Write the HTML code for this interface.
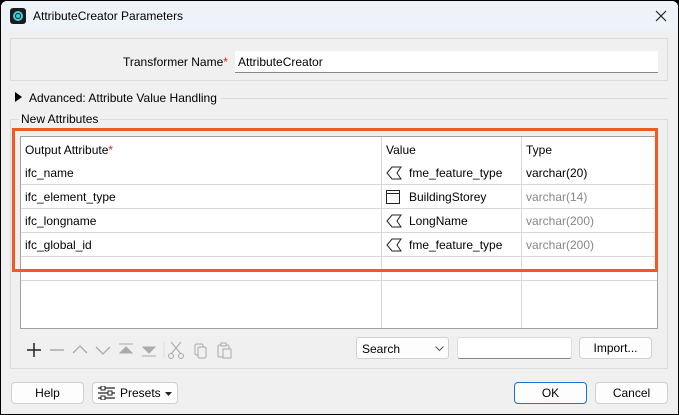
<!DOCTYPE html>
<html><head><style>
*{box-sizing:border-box;margin:0;padding:0}
body{width:679px;height:415px;background:#000;font-family:"Liberation Sans",sans-serif;font-size:12px;color:#000;overflow:hidden;position:relative}
.win{position:absolute;left:1px;top:1px;width:677px;height:413px;background:#f0f0f0;border-radius:6px 6px 0 0;overflow:hidden}
.title{position:absolute;left:0;top:0;width:677px;height:30px;background:#eef3fa}
.abs{position:absolute}
.grp{position:absolute;border:1px solid #dcdcdc}
.btn{position:absolute;height:22px;background:#fdfdfd;border:1px solid #d0d0d0;border-radius:4px;text-align:center;line-height:20px}
.cell{position:absolute;height:24px;line-height:24px;padding-left:4px}
.hl{position:absolute;left:0;width:636px;height:1px;background:#d8d8d8}
.g{color:#888}
</style></head><body>
<div class="win">
<div class="title">
 <div class="abs" style="left:9px;top:7px;width:16px;height:16px;background:#1b1b1b;border-radius:3px"></div>
 <div class="abs" style="left:12px;top:10px;width:10px;height:10px;border:2px solid #3ccde6;border-radius:50%"></div>
 <div class="abs" style="left:15px;top:13px;width:4px;height:4px;background:#3ccde6;border-radius:50%"></div>
 <div class="abs" style="left:32px;top:8px;font-size:12px">AttributeCreator Parameters</div>
 <svg class="abs" style="left:654px;top:9px" width="12" height="12"><path d="M1 1L11 11M11 1L1 11" stroke="#222" stroke-width="1.2"/></svg>
</div>
<div class="grp" style="left:9px;top:37px;width:658px;height:43px"></div>
<div class="abs" style="left:122px;top:54px;font-size:12px">Transformer Name<span style="color:#e02020">*</span></div>
<div class="abs" style="left:234px;top:50px;width:423px;height:22px;background:#fff;border-bottom:1px solid #888;padding:4px 3px;font-size:12px">AttributeCreator</div>
<svg class="abs" style="left:14px;top:91px" width="8" height="10"><path d="M0 0L7 5L0 10Z" fill="#000"/></svg>
<div class="abs" style="left:28px;top:90px;font-size:12px">Advanced: Attribute Value Handling</div>
<div class="abs" style="left:220px;top:97px;width:447px;height:1px;background:#dcdcdc"></div>
<div class="grp" style="left:9px;top:118px;width:658px;height:250px"></div>
<div class="abs" style="left:18px;top:111px;background:#f0f0f0;padding:0 2px;font-size:12px">New Attributes</div>
<div class="abs" style="left:19px;top:135px;width:638px;height:193px;background:#fff;border:1px solid #a0a0a0">
 <div class="abs" style="left:360px;top:0;width:1px;height:191px;background:#d8d8d8"></div>
 <div class="abs" style="left:500px;top:0;width:1px;height:191px;background:#d8d8d8"></div>
 <div class="hl" style="top:47px"></div><div class="hl" style="top:71px"></div><div class="hl" style="top:95px"></div><div class="hl" style="top:119px"></div><div class="hl" style="top:143px"></div>
 <div class="cell" style="left:0;top:1px">Output Attribute<span style="color:#e02020">*</span></div>
 <div class="cell" style="left:361px;top:1px">Value</div>
 <div class="cell" style="left:501px;top:1px">Type</div>
 <div class="cell" style="left:0;top:24px">ifc_name</div>
 <div class="cell" style="left:0;top:48px">ifc_element_type</div>
 <div class="cell" style="left:0;top:72px">ifc_longname</div>
 <div class="cell" style="left:0;top:96px">ifc_global_id</div>
 <div class="cell" style="left:384px;top:24px">fme_feature_type</div>
 <div class="cell" style="left:384px;top:48px">BuildingStorey</div>
 <div class="cell" style="left:384px;top:72px">LongName</div>
 <div class="cell" style="left:384px;top:96px">fme_feature_type</div>
 <div class="cell" style="left:501px;top:24px">varchar(20)</div>
 <div class="cell g" style="left:501px;top:48px">varchar(14)</div>
 <div class="cell g" style="left:501px;top:72px">varchar(200)</div>
 <div class="cell g" style="left:501px;top:96px">varchar(200)</div>
 <svg class="abs" style="left:365px;top:29px" width="16" height="14"><path d="M15 1H6L1 7L6 13H15L11 7Z" fill="none" stroke="#222"/></svg>
 <svg class="abs" style="left:365px;top:77px" width="16" height="14"><path d="M15 1H6L1 7L6 13H15L11 7Z" fill="none" stroke="#222"/></svg>
 <svg class="abs" style="left:365px;top:101px" width="16" height="14"><path d="M15 1H6L1 7L6 13H15L11 7Z" fill="none" stroke="#222"/></svg>
 <svg class="abs" style="left:365px;top:53px" width="14" height="14"><rect x="0.5" y="0.5" width="13" height="13" fill="none" stroke="#222"/><path d="M1 3.5H13" stroke="#222"/></svg>
</div>
<div class="abs" style="left:11px;top:127px;width:646px;height:144px;border:3px solid #f05a22"></div>
<svg class="abs" style="left:24px;top:339px" width="220" height="20">
 <path d="M2 10H16M9 3V17" stroke="#222" stroke-width="1.5"/>
 <path d="M25 10H39" stroke="#aaa" stroke-width="1.5"/>
 <path d="M48 13L55 6L62 13" stroke="#aaa" fill="none" stroke-width="1.3"/>
 <path d="M71 7L78 14L85 7" stroke="#aaa" fill="none" stroke-width="1.3"/>
 <path d="M94 4H108M95 13L101 7L107 13Z" stroke="#aaa" fill="#aaa"/>
 <path d="M117 16H131M118 7L124 13L130 7Z" stroke="#aaa" fill="#aaa"/>
 <path d="M139 2V18" stroke="#ddd"/>
 <path d="M146 2L156 14M156 2L146 14" stroke="#aaa" fill="none"/><circle cx="146" cy="16" r="2.5" stroke="#aaa" fill="none"/><circle cx="156" cy="16" r="2.5" stroke="#aaa" fill="none"/>
 <rect x="170" y="4" width="8" height="11" rx="1.5" stroke="#aaa" fill="none"/><rect x="173" y="7" width="8" height="11" rx="1.5" stroke="#aaa" fill="#f0f0f0"/>
 <rect x="193" y="5" width="11" height="12" rx="1.5" stroke="#aaa" fill="none"/><rect x="196" y="3" width="5" height="3" stroke="#aaa" fill="#f0f0f0"/><rect x="198" y="9" width="8" height="9" stroke="#aaa" fill="#f0f0f0"/>
</svg>
<div class="abs" style="left:355px;top:336px;width:93px;height:22px;background:#fdfdfd;border:1px solid #d0d0d0;border-radius:3px;padding:4px 5px;font-size:12px">Search<svg class="abs" style="left:78px;top:8px" width="9" height="6"><path d="M0.5 0.5L4.5 4.5L8.5 0.5" stroke="#555" fill="none"/></svg></div>
<div class="abs" style="left:456px;top:336px;width:115px;height:22px;background:#fff;border:1px solid #ddd;border-bottom:1px solid #888;border-radius:3px"></div>
<div class="btn" style="left:578px;top:336px;width:73px;font-size:12px">Import...</div>
<div class="btn" style="left:10px;top:381px;width:73px;font-size:12px">Help</div>
<div class="btn" style="left:91px;top:381px;width:86px;font-size:12px;text-align:left;padding-left:27px">Presets<svg class="abs" style="left:5px;top:3px" width="18" height="14"><path d="M0 2H17M0 7H17M0 12H17" stroke="#222" stroke-width="1.3"/><rect x="3" y="0" width="4" height="4" fill="#fff" stroke="#222"/><rect x="10" y="5" width="4" height="4" fill="#fff" stroke="#222"/><rect x="3" y="10" width="4" height="4" fill="#fff" stroke="#222"/></svg><svg class="abs" style="left:72px;top:9px" width="8" height="4"><path d="M0 0H7L3.5 4Z" fill="#222"/></svg></div>
<div class="btn" style="left:513px;top:381px;width:73px;border-color:#1a73d9;font-size:12px">OK</div>
<div class="btn" style="left:594px;top:381px;width:73px;font-size:12px">Cancel</div>
</div>
</body></html>
